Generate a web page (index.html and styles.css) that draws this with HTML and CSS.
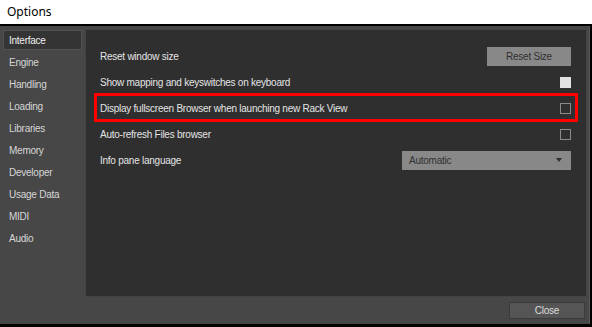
FILE: index.html
```html
<!DOCTYPE html>
<html>
<head>
<meta charset="utf-8">
<link rel="stylesheet" href="styles.css">
</head>
<body>
<div class="titlebar">Options</div>
<div class="window">
  <div class="main">
    <ul class="sidebar">
      <li class="item selected">Interface</li>
      <li class="item">Engine</li>
      <li class="item">Handling</li>
      <li class="item">Loading</li>
      <li class="item">Libraries</li>
      <li class="item">Memory</li>
      <li class="item">Developer</li>
      <li class="item">Usage Data</li>
      <li class="item">MIDI</li>
      <li class="item">Audio</li>
    </ul>
    <div class="panel">
      <div class="row">
        <span class="label">Reset window size</span>
        <span class="button">Reset Size</span>
      </div>
      <div class="row">
        <span class="label">Show mapping and keyswitches on keyboard</span>
        <span class="checkbox checked"></span>
      </div>
      <div class="row">
        <span class="label">Display fullscreen Browser when launching new Rack View</span>
        <span class="checkbox"></span>
      </div>
      <div class="row">
        <span class="label">Auto-refresh Files browser</span>
        <span class="checkbox"></span>
      </div>
      <div class="row">
        <span class="label">Info pane language</span>
        <span class="dropdown"><span>Automatic</span><span class="arrow"></span></span>
      </div>
      <div class="highlight"></div>
    </div>
  </div>
  <div class="footer">
    <span class="close">Close</span>
  </div>
</div>
</body>
</html>
```
FILE: styles.css
```css
html, body {
  margin: 0;
  padding: 0;
}
body {
  width: 592px;
  height: 327px;
  background: #000;
  overflow: hidden;
  font-family: "Liberation Sans", Arial, sans-serif;
  font-size: 10px;
}
.titlebar {
  height: 24px;
  line-height: 23px;
  background: #fff;
  border-bottom: 2px solid #000;
  padding-left: 7px;
  font-family: "Noto Sans", "Open Sans", sans-serif;
  font-size: 12px;
  color: #000;
}
.window {
  width: 590px;
  height: 298px;
  box-sizing: border-box;
  background: #474747;
  padding: 3px 2px 0 3px;
  border-right: 1px solid #5a5a5a;
  display: flex;
  flex-direction: column;
  letter-spacing: -0.25px;
}
.main {
  display: flex;
  gap: 2px;
  height: 268px;
}
.sidebar {
  list-style: none;
  margin: 0;
  padding: 1px 0 0 0;
  width: 80px;
}
.item {
  height: 20px;
  line-height: 22px;
  margin-bottom: 2px;
  width: 79px;
  box-sizing: border-box;
  padding-left: 6px;
  color: #d6d6d6;
}
.item.selected {
  background: #343434;
  border: 1px solid #525252;
  padding-left: 5px;
  line-height: 20px;
  color: #f0f0f0;
}
.panel {
  position: relative;
  flex: 1;
  background: #2f2f2f;
  border: 1px solid #434343;
  box-sizing: border-box;
  padding: 13px 15px 0 14px;
}
.row {
  height: 26px;
  display: flex;
  align-items: center;
  justify-content: space-between;
}
.label {
  color: #e4e4e4;
}
.button {
  width: 84px;
  height: 19px;
  line-height: 19px;
  background: #888;
  color: #303030;
  text-align: center;
}
.checkbox {
  width: 11px;
  height: 11px;
  box-sizing: border-box;
  border: 1px solid #8a8a8a;
}
.checkbox.checked {
  background: #e2e2e2;
  border-color: #e2e2e2;
}
.dropdown {
  width: 169px;
  height: 19px;
  background: #888;
  color: #303030;
  display: flex;
  align-items: center;
  justify-content: space-between;
  padding: 0 9px 0 7px;
  box-sizing: border-box;
}
.arrow {
  width: 0;
  height: 0;
  border-left: 3.5px solid transparent;
  border-right: 3.5px solid transparent;
  border-top: 4px solid #303030;
}
.highlight {
  position: absolute;
  left: 8px;
  top: 63px;
  width: 484px;
  height: 29px;
  box-sizing: border-box;
  border: 3px solid #ff0000;
}
.footer {
  display: flex;
  justify-content: flex-end;
  padding: 5px 2px 0 0;
}
.close {
  width: 76px;
  height: 17px;
  line-height: 16px;
  box-sizing: border-box;
  background: #555;
  border: 1px solid #3a3a3a;
  color: #dedede;
  text-align: center;
}
```
